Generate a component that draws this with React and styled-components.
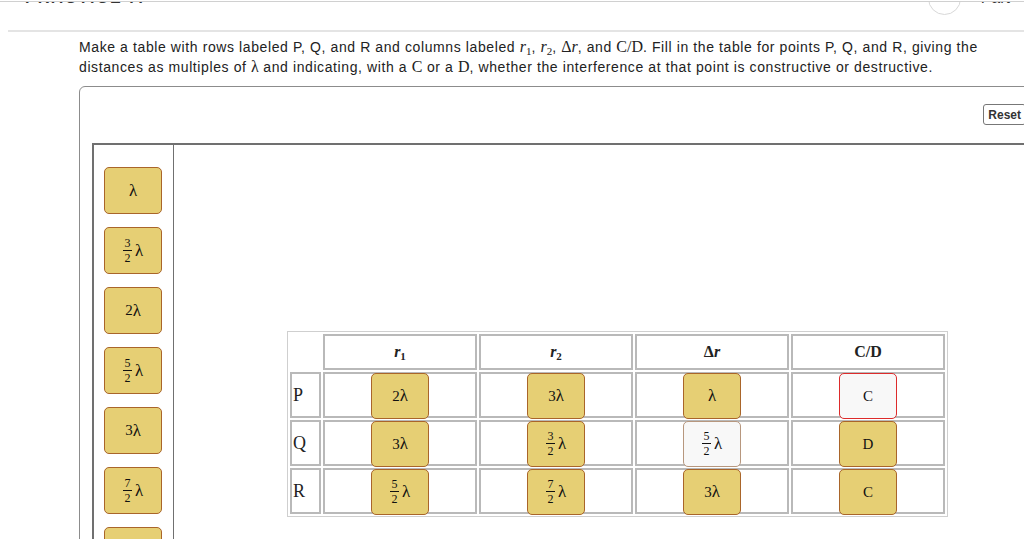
import React from "react";
import styled, { createGlobalStyle } from "styled-components";

const GlobalStyle = createGlobalStyle`
  html, body {
    margin: 0;
    padding: 0;
    background: #fff;
    overflow: hidden;
  }
  body {
    font-family: "Liberation Sans", Arial, sans-serif;
    color: #222;
  }
`;

const Page = styled.div`
  width: 1024px;
  height: 539px;
  overflow: hidden;
`;

const TopBar = styled.div`
  height: 28px;
  display: flex;
  align-items: flex-start;
  border-top: 1px solid #d0d0d0;
  margin-top: 1px;
  overflow: hidden;
`;

const CutTitle = styled.div`
  margin: -13px 0 0 25px;
  font-size: 16px;
  font-weight: bold;
  letter-spacing: 2px;
  color: #333;
  flex: 1;
`;

const Circle = styled.div`
  width: 31px;
  height: 31px;
  margin: -20px 0 0 0;
  border: 1px solid #d8d8d8;
  border-radius: 50%;
`;

const CutPart = styled.div`
  margin: -13px 14px 0 20px;
  font-size: 16px;
  color: #333;
`;

const Separator = styled.div`
  height: 2px;
  margin-left: 8px;
  background: #e4e4e4;
`;

const Content = styled.div`
  padding-left: 79px;
`;

const Question = styled.p`
  margin: 5px 0 9px 0;
  font-size: 14px;
  letter-spacing: 0.6px;
  line-height: 20px;
  height: 40px;
  color: #222;
  width: 920px;
`;

const M = styled.span`
  font-family: "Liberation Serif", "DejaVu Serif", serif;
  font-size: 16px;
  line-height: 0;
  letter-spacing: 0;
  font-style: ${p => (p.$upright ? "normal" : "italic")};
`;

const Sub = styled.sub`
  font-size: 11px;
  line-height: 0;
  font-style: normal;
  vertical-align: -3px;
`;

const Panel = styled.div`
  width: 960px;
  height: 500px;
  border: 1px solid #8c8c8c;
  border-radius: 6px 0 0 0;
  padding: 17px 12px 0 12px;
  box-sizing: border-box;
`;

const ResetRow = styled.div`
  display: flex;
  justify-content: flex-end;
  margin-bottom: 18px;
`;

const ResetButton = styled.button`
  height: 21px;
  padding: 0 4px;
  border: 1px solid #777;
  border-radius: 3px;
  background: #fff;
  font-family: "Liberation Sans", Arial, sans-serif;
  font-size: 12px;
  font-weight: bold;
  color: #333;
`;

const DragArea = styled.div`
  display: flex;
  border-top: 2px solid #707070;
  border-left: 2px solid #707070;
  height: 420px;
`;

const Palette = styled.div`
  width: 80px;
  border-right: 1px solid #707070;
  padding: 22px 0 0 10px;
  box-sizing: border-box;
  display: flex;
  flex-direction: column;
  gap: 13px;
`;

const DropArea = styled.div`
  padding: 186px 0 0 113px;
`;

const Tile = styled.div`
  width: 58px;
  height: ${p => (p.$inCell ? "46px" : "47px")};
  box-sizing: border-box;
  border-radius: 5px;
  border: 1px solid ${p => (p.$wrong ? "#dd2b2b" : p.$empty ? "#b7977e" : "#a9652a")};
  background: ${p => (p.$empty || p.$wrong ? "#f8f8f8" : "#e6cf74")};
  display: flex;
  align-items: center;
  justify-content: center;
  font-family: "Liberation Serif", "DejaVu Serif", serif;
  font-size: 15px;
  color: #111;
  margin: ${p => (p.$inCell ? "-1px auto -3px" : "0")};
  flex-shrink: 0;
`;

const Lambda = styled.span`
  font-size: 17px;
`;

const Frac = styled.span`
  display: inline-flex;
  flex-direction: column;
  align-items: center;
  font-size: 12px;
  line-height: 11px;
  margin-right: 3px;
  font-style: normal;
`;

const FracBar = styled.span`
  width: 9px;
  height: 1px;
  background: #111;
  margin: 1px 0 2px;
`;

const Table = styled.table`
  border: 1px solid #cfcfcf;
  border-collapse: separate;
  border-spacing: 2px;
`;

const HeadCell = styled.th`
  width: 150px;
  height: 32px;
  padding: 0;
  border: 2px solid #b9b9b9;
  font-family: "Liberation Serif", "DejaVu Serif", serif;
  font-size: 15px;
  font-weight: bold;
  color: #222;
`;

const Corner = styled.th`
  width: 26px;
  border: 2px solid transparent;
  padding: 0;
`;

const RowLabel = styled.td`
  width: 26px;
  padding: 0 0 0 1px;
  border: 2px solid #b9b9b9;
  font-family: "Liberation Serif", "DejaVu Serif", serif;
  font-size: 18px;
  color: #222;
  vertical-align: middle;
`;

const Cell = styled.td`
  height: 42px;
  padding: 0;
  border: 2px solid #b9b9b9;
`;

const Value = ({ v }) => {
  if (v === "C" || v === "D") return <span>{v}</span>;
  const [num, den] = v.split("/");
  if (den) {
    return (
      <>
        <Frac>
          <span>{num}</span>
          <FracBar />
          <span>{den}</span>
        </Frac>
        <Lambda>λ</Lambda>
      </>
    );
  }
  return (
    <>
      {v !== "1" && <span>{v}</span>}
      <Lambda>λ</Lambda>
    </>
  );
};

const paletteItems = ["1", "3/2", "2", "5/2", "3", "7/2", "4"];

const rows = [
  { label: "P", values: [{ v: "2" }, { v: "3" }, { v: "1" }, { v: "C", wrong: true }] },
  { label: "Q", values: [{ v: "3" }, { v: "3/2" }, { v: "5/2", empty: true }, { v: "D" }] },
  { label: "R", values: [{ v: "5/2" }, { v: "7/2" }, { v: "3" }, { v: "C" }] },
];

export default function App() {
  return (
    <Page>
      <GlobalStyle />
      <TopBar>
        <CutTitle>PRACTICE IT</CutTitle>
        <Circle />
        <CutPart>Part</CutPart>
      </TopBar>
      <Separator />
      <Content>
        <Question>
          Make a table with rows labeled P, Q, and R and columns labeled{" "}
          <M>r<Sub>1</Sub></M>, <M>r<Sub>2</Sub></M>, <M $upright>Δ</M><M>r</M>, and{" "}
          <M $upright>C/D</M>. Fill in the table for points P, Q, and R, giving the
          distances as multiples of <M $upright>λ</M> and indicating, with a <M $upright>C</M> or a{" "}
          <M $upright>D</M>, whether the interference at that point is constructive or destructive.
        </Question>
        <Panel>
          <ResetRow>
            <ResetButton>Reset</ResetButton>
          </ResetRow>
          <DragArea>
            <Palette>
              {paletteItems.map(v => (
                <Tile key={v}>
                  <Value v={v} />
                </Tile>
              ))}
            </Palette>
            <DropArea>
              <Table>
                <thead>
                  <tr>
                    <Corner />
                    <HeadCell>
                      <M>r<Sub>1</Sub></M>
                    </HeadCell>
                    <HeadCell>
                      <M>r<Sub>2</Sub></M>
                    </HeadCell>
                    <HeadCell>
                      <M $upright>Δ</M>
                      <M>r</M>
                    </HeadCell>
                    <HeadCell>
                      <M $upright>C/D</M>
                    </HeadCell>
                  </tr>
                </thead>
                <tbody>
                  {rows.map(row => (
                    <tr key={row.label}>
                      <RowLabel>{row.label}</RowLabel>
                      {row.values.map((c, i) => (
                        <Cell key={i}>
                          <Tile $inCell $wrong={c.wrong} $empty={c.empty}>
                            <Value v={c.v} />
                          </Tile>
                        </Cell>
                      ))}
                    </tr>
                  ))}
                </tbody>
              </Table>
            </DropArea>
          </DragArea>
        </Panel>
      </Content>
    </Page>
  );
}
